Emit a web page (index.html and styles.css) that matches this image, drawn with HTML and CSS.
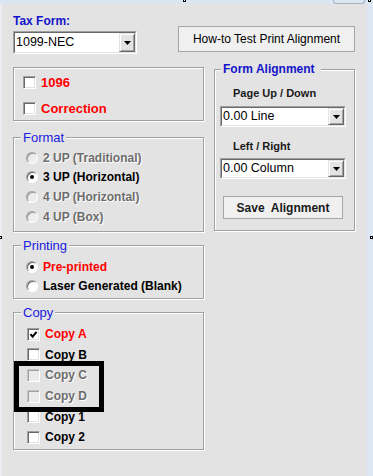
FILE: index.html
```html
<!DOCTYPE html>
<html lang="en">
<head>
  <meta charset="UTF-8">
  <title>Print Alignment</title>
  <link rel="stylesheet" href="styles.css">
</head>
<body>
  <div class="window">
    <div class="topbar"><span class="tab"></span></div>
    <div class="frame">
      <div class="panel">

        <div class="header">
          <div class="taxform">
            <div class="field-label">Tax Form:</div>
            <div class="combo combo-tax">
              <div class="combo-inner">
                <span class="combo-text">1099-NEC</span>
                <span class="combo-btn"><svg width="7" height="4" viewBox="0 0 7 4"><polygon points="0,0 7,0 3.5,4" fill="#000"/></svg></span>
              </div>
            </div>
          </div>
          <button class="btn btn-howto">How-to Test Print Alignment</button>
        </div>

        <div class="main">
          <div class="left-col">
            <!-- 1096 / correction -->
            <div class="group g-extra">
              <label class="opt opt-big red"><span class="chk"></span>1096</label>
              <label class="opt opt-big red"><span class="chk"></span>Correction</label>
            </div>

            <div class="group g-format">
              <span class="group-title">Format</span>
              <label class="opt off"><span class="radio"></span>2 UP (Traditional)</label>
              <label class="opt"><span class="radio on"></span>3 UP (Horizontal)</label>
              <label class="opt off"><span class="radio"></span>4 UP (Horizontal)</label>
              <label class="opt off"><span class="radio"></span>4 UP (Box)</label>
            </div>

            <div class="group g-print">
              <span class="group-title">Printing</span>
              <label class="opt red"><span class="radio on"></span>Pre-printed</label>
              <label class="opt"><span class="radio"></span>Laser Generated (Blank)</label>
            </div>

            <div class="group g-copy">
              <span class="group-title">Copy</span>
              <label class="opt red"><span class="chk"><svg width="9" height="9" viewBox="0 0 9 9"><polyline points="1.5,4.2 3.6,6.6 7.6,1.8" fill="none" stroke="#000" stroke-width="2"/></svg></span>Copy A</label>
              <label class="opt"><span class="chk"></span>Copy B</label>
              <label class="opt off"><span class="chk"></span>Copy C</label>
              <label class="opt off"><span class="chk"></span>Copy D</label>
              <label class="opt"><span class="chk"></span>Copy 1</label>
              <label class="opt"><span class="chk"></span>Copy 2</label>
            </div>
          </div>

          <div class="group g-align">
            <span class="group-title title-bold">Form Alignment</span>
            <div class="align-label">Page Up / Down</div>
            <div class="combo combo-small">
              <div class="combo-inner">
                <span class="combo-text">0.00 Line</span>
                <span class="combo-btn"><svg width="7" height="4" viewBox="0 0 7 4"><polygon points="0,0 7,0 3.5,4" fill="#000"/></svg></span>
              </div>
            </div>
            <div class="align-label label-lr">Left / Right</div>
            <div class="combo combo-small combo-lr">
              <div class="combo-inner">
                <span class="combo-text">0.00 Column</span>
                <span class="combo-btn"><svg width="7" height="4" viewBox="0 0 7 4"><polygon points="0,0 7,0 3.5,4" fill="#000"/></svg></span>
              </div>
            </div>
            <button class="btn btn-save">Save&nbsp; Alignment</button>
          </div>
        </div>

      </div>
      <div class="edge-right"></div>
    </div>

    <div class="mark"></div>
    <span class="handle h1"></span>
    <span class="handle h2"></span>
    <span class="handle h3"></span>
    <span class="handle h4"></span>
  </div>
</body>
</html>
```

FILE: styles.css
```css
body {
  margin: 0;
  font-family: "Liberation Sans", Arial, sans-serif;
  background: #e3e3e3;
}
.window {
  position: relative;
  width: 373px;
  height: 476px;
  overflow: hidden;
  background: #e3e3e3;
}
.topbar {
  height: 4px;
  background: #dbe6f3;
  display: flex;
  justify-content: flex-end;
  padding-right: 8px;
}
.tab {
  width: 30px;
  height: 3px;
  border: 1px solid #a9b3c0;
  border-top: 0;
  border-radius: 0 0 3px 3px;
}
.frame {
  display: flex;
  height: 472px;
}
.panel {
  flex: 1;
  border-left: 2px solid #eaedf1;
  padding: 10px 12px 0 11px;
}
.edge-right {
  width: 6px;
  background: #dde7f3;
}

/* header */
.header {
  display: flex;
  justify-content: space-between;
  align-items: flex-start;
}
.field-label {
  font-size: 12px;
  font-weight: bold;
  line-height: 14px;
  color: #1414c8;
}
.combo {
  box-sizing: border-box;
  border: 1px solid;
  border-color: #a0a0a0 #fff #fff #a0a0a0;
  background: #fff;
}
.combo-inner {
  display: flex;
  height: 100%;
  box-sizing: border-box;
  border: 1px solid;
  border-color: #696969 #e3e3e3 #e3e3e3 #696969;
}
.combo-text {
  flex: 1;
  font-size: 12.5px;
  line-height: 17px;
  padding-left: 1px;
  align-self: center;
  white-space: nowrap;
}
.combo-btn {
  width: 16px;
  box-sizing: border-box;
  background: #e3e3e3;
  border: 1px solid;
  border-color: #e3e3e3 #696969 #696969 #e3e3e3;
  box-shadow: inset 1px 1px 0 #fff, inset -1px -1px 0 #a0a0a0;
  display: flex;
  align-items: center;
  justify-content: center;
}
.combo-tax {
  width: 124px;
  height: 23px;
  margin-top: 3px;
}
.btn {
  box-sizing: border-box;
  background: #f0f0f0;
  border: 1px solid #a5a5a5;
  font-family: inherit;
  color: #000;
  padding: 0;
}
.btn-howto {
  width: 177px;
  height: 26px;
  margin-top: 12px;
  font-size: 12px;
}

/* columns */
.main {
  display: flex;
  align-items: flex-start;
  margin-top: 13px;
}
.left-col {
  width: 191px;
}
.group {
  position: relative;
  box-sizing: border-box;
  border: 1px solid #a0a0a0;
  box-shadow: 1px 1px 0 #fff, inset 1px 1px 0 #fff;
}
.group-title {
  position: absolute;
  top: -7px;
  left: 7px;
  padding: 0 2px;
  background: #e3e3e3;
  color: #1a1ae0;
  font-size: 13px;
  line-height: 14px;
}
.title-bold {
  top: -8px;
  left: 6px;
  padding: 0 6px 0 2px;
  font-size: 12px;
  font-weight: bold;
  color: #1414c8;
}

.opt {
  display: flex;
  align-items: center;
  gap: 5px;
  font-size: 12px;
  font-weight: bold;
  color: #000;
  white-space: nowrap;
}
.opt.red { color: #f00; }
.opt.off {
  color: #6d6d6d;
  text-shadow: 1px 1px 0 #fff;
}
.opt-big { font-size: 13px; }

.chk {
  width: 13px;
  height: 13px;
  box-sizing: border-box;
  flex: none;
  background: #fff;
  border: 1px solid;
  border-color: #a0a0a0 #fff #fff #a0a0a0;
  box-shadow: inset 1px 1px 0 #696969, inset -1px -1px 0 #e3e3e3;
  display: flex;
  align-items: center;
  justify-content: center;
}
.off .chk {
  background: #ebebeb;
  border-color: #c4c4c4 #fff #fff #c4c4c4;
  box-shadow: inset 1px 1px 0 #a0a0a0;
}
.radio {
  position: relative;
  width: 12px;
  height: 12px;
  box-sizing: border-box;
  flex: none;
  border-radius: 50%;
  background: #fff;
  border: 1px solid;
  border-color: #a0a0a0 #fff #fff #a0a0a0;
  box-shadow: inset 1px 1px 0 #696969;
}
.off .radio {
  background: #ededed;
  box-shadow: inset 1px 1px 0 #a0a0a0;
}
.radio.on::after {
  content: "";
  position: absolute;
  left: 3px;
  top: 3px;
  width: 4px;
  height: 4px;
  border-radius: 50%;
  background: #000;
}

.g-extra {
  height: 54px;
  padding: 1px 0 0 9px;
}
.g-extra .opt { height: 26px; }
.g-format {
  height: 95px;
  margin-top: 16px;
  padding: 10px 0 0 12px;
}
.g-format .opt { height: 19.6px; }
.g-print {
  height: 54px;
  margin-top: 13px;
  padding: 11.5px 0 0 12px;
}
.g-print .opt { height: 19px; }
.g-copy {
  height: 138px;
  margin-top: 13px;
  padding: 11px 0 0 13px;
}
.g-copy .opt { height: 20.6px; }

/* form alignment */
.g-align {
  width: 141px;
  height: 162px;
  margin: 2px 0 0 10px;
  padding: 16px 0 0 5px;
}
.align-label {
  margin-left: 13px;
  font-size: 11px;
  font-weight: bold;
  line-height: 14px;
  color: #1a1a1a;
}
.label-lr { margin-top: 12px; }
.combo-small {
  width: 126px;
  height: 21px;
  margin-top: 6px;
}
.combo-lr { margin-top: 5px; }
.btn-save {
  display: block;
  width: 120px;
  height: 23px;
  margin: 17px 0 0 3px;
  font-size: 12px;
  font-weight: bold;
  color: #1a1a1a;
}

/* overlays */
.mark {
  position: absolute;
  left: 14px;
  top: 361px;
  width: 90px;
  height: 51px;
  box-sizing: border-box;
  border: 5px solid #000;
}
.handle {
  position: absolute;
  width: 3px;
  height: 3px;
  box-sizing: border-box;
  border: 1px solid #000;
  background: #fff;
}
.h1 { left: 183px; top: -1px; }
.h2 { left: 368px; top: -1px; }
.h3 { left: 370px; top: 236px; }
.h4 { left: -1px; top: 236px; }
```
